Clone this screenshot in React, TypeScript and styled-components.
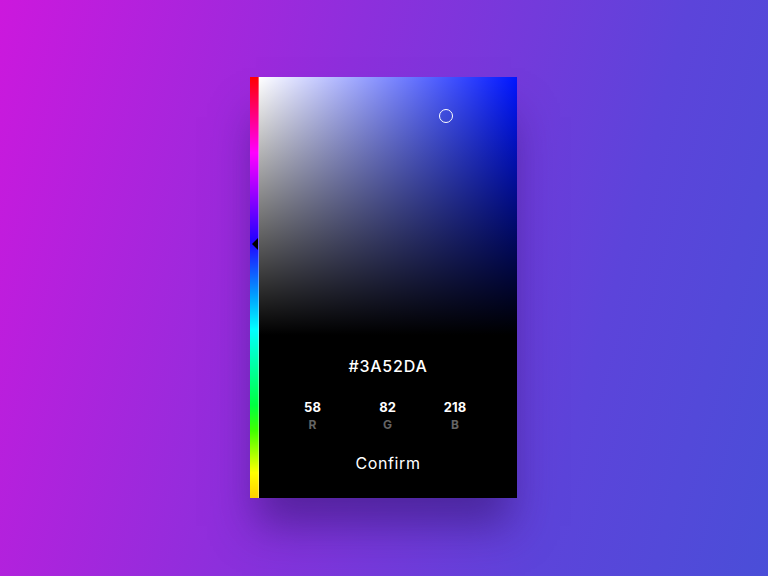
import React from "react";
import styled, { createGlobalStyle } from "styled-components";

const Global = createGlobalStyle`
  html, body { margin: 0; padding: 0; }
  body {
    width: 768px;
    height: 576px;
    overflow: hidden;
    font-family: "Inter", "Open Sans", sans-serif;
  }
`;

const Stage = styled.div`
  width: 768px;
  height: 576px;
  background: linear-gradient(105deg, #cc18dd 0%, #8d2fdc 40%, #5c44da 75%, #4a4ed8 100%);
  display: flex;
  align-items: flex-start;
  justify-content: center;
  padding: 77px 1px 0 0;
  box-sizing: border-box;
`;

const Card = styled.div`
  width: 267px;
  height: 421px;
  display: flex;
  background: #000;
  box-shadow: 0 34px 40px -6px rgba(50, 20, 110, 0.55);
`;

const HueStrip = styled.div`
  position: relative;
  width: 8px;
  flex: none;
  background: linear-gradient(
    to bottom,
    #ff0000 0%,
    #ff00ff 18%,
    #2200ff 39%,
    #00a0ff 52%,
    #00ffff 60%,
    #00ff40 78%,
    #40ff00 84%,
    #ffff00 94%,
    #ffd000 100%
  );
  border-right: 1px solid rgba(255, 255, 255, 0.35);
`;

const Notch = styled.div<{ $top: number }>`
  position: absolute;
  right: 0;
  top: ${(p) => p.$top - 6}px;
  width: 0;
  height: 0;
  border-top: 6px solid transparent;
  border-bottom: 6px solid transparent;
  border-right: 6px solid #000;
`;

const Field = styled.div`
  position: relative;
  flex: 1;
  display: flex;
  flex-direction: column;
  justify-content: flex-end;
  align-items: center;
  padding-bottom: 25px;
  background:
    linear-gradient(to bottom, rgba(0, 0, 0, 0) 0px, #000 258px),
    linear-gradient(to right, #ffffff 0%, #0016ff 100%);
  color: #fff;
`;

const Handle = styled.div<{ $x: number; $y: number }>`
  position: absolute;
  left: ${(p) => p.$x - 7}px;
  top: ${(p) => p.$y - 7}px;
  width: 14px;
  height: 14px;
  box-sizing: border-box;
  border: 1.5px solid #fff;
  border-radius: 50%;
`;

const Hex = styled.div`
  font-size: 16px;
  line-height: 20px;
  letter-spacing: 0.8px;
  font-weight: 500;
  margin-bottom: 23px;
`;

const Channels = styled.div`
  display: grid;
  grid-template-columns: 75px 75px 60px;
  align-self: flex-start;
  margin-left: 16px;
  margin-bottom: 21px;
`;

const Channel = styled.div`
  display: flex;
  flex-direction: column;
  align-items: center;
  gap: 3px;
`;

const Value = styled.div`
  font-size: 13px;
  line-height: 16px;
  font-weight: 700;
`;

const Label = styled.div`
  font-size: 12px;
  line-height: 14px;
  font-weight: 700;
  color: #646464;
`;

const Confirm = styled.button`
  background: none;
  border: none;
  padding: 0;
  color: #fff;
  font-family: inherit;
  font-size: 16px;
  line-height: 20px;
  letter-spacing: 0.6px;
  font-weight: 400;
  cursor: pointer;
`;

const channels = [
  { value: 58, label: "R" },
  { value: 82, label: "G" },
  { value: 218, label: "B" },
];

export default function App() {
  return (
    <>
      <Global />
      <Stage>
        <Card>
          <HueStrip>
            <Notch $top={167} />
          </HueStrip>
          <Field>
            <Handle $x={187} $y={39} />
            <Hex>#3A52DA</Hex>
            <Channels>
              {channels.map((c) => (
                <Channel key={c.label}>
                  <Value>{c.value}</Value>
                  <Label>{c.label}</Label>
                </Channel>
              ))}
            </Channels>
            <Confirm>Confirm</Confirm>
          </Field>
        </Card>
      </Stage>
    </>
  );
}
